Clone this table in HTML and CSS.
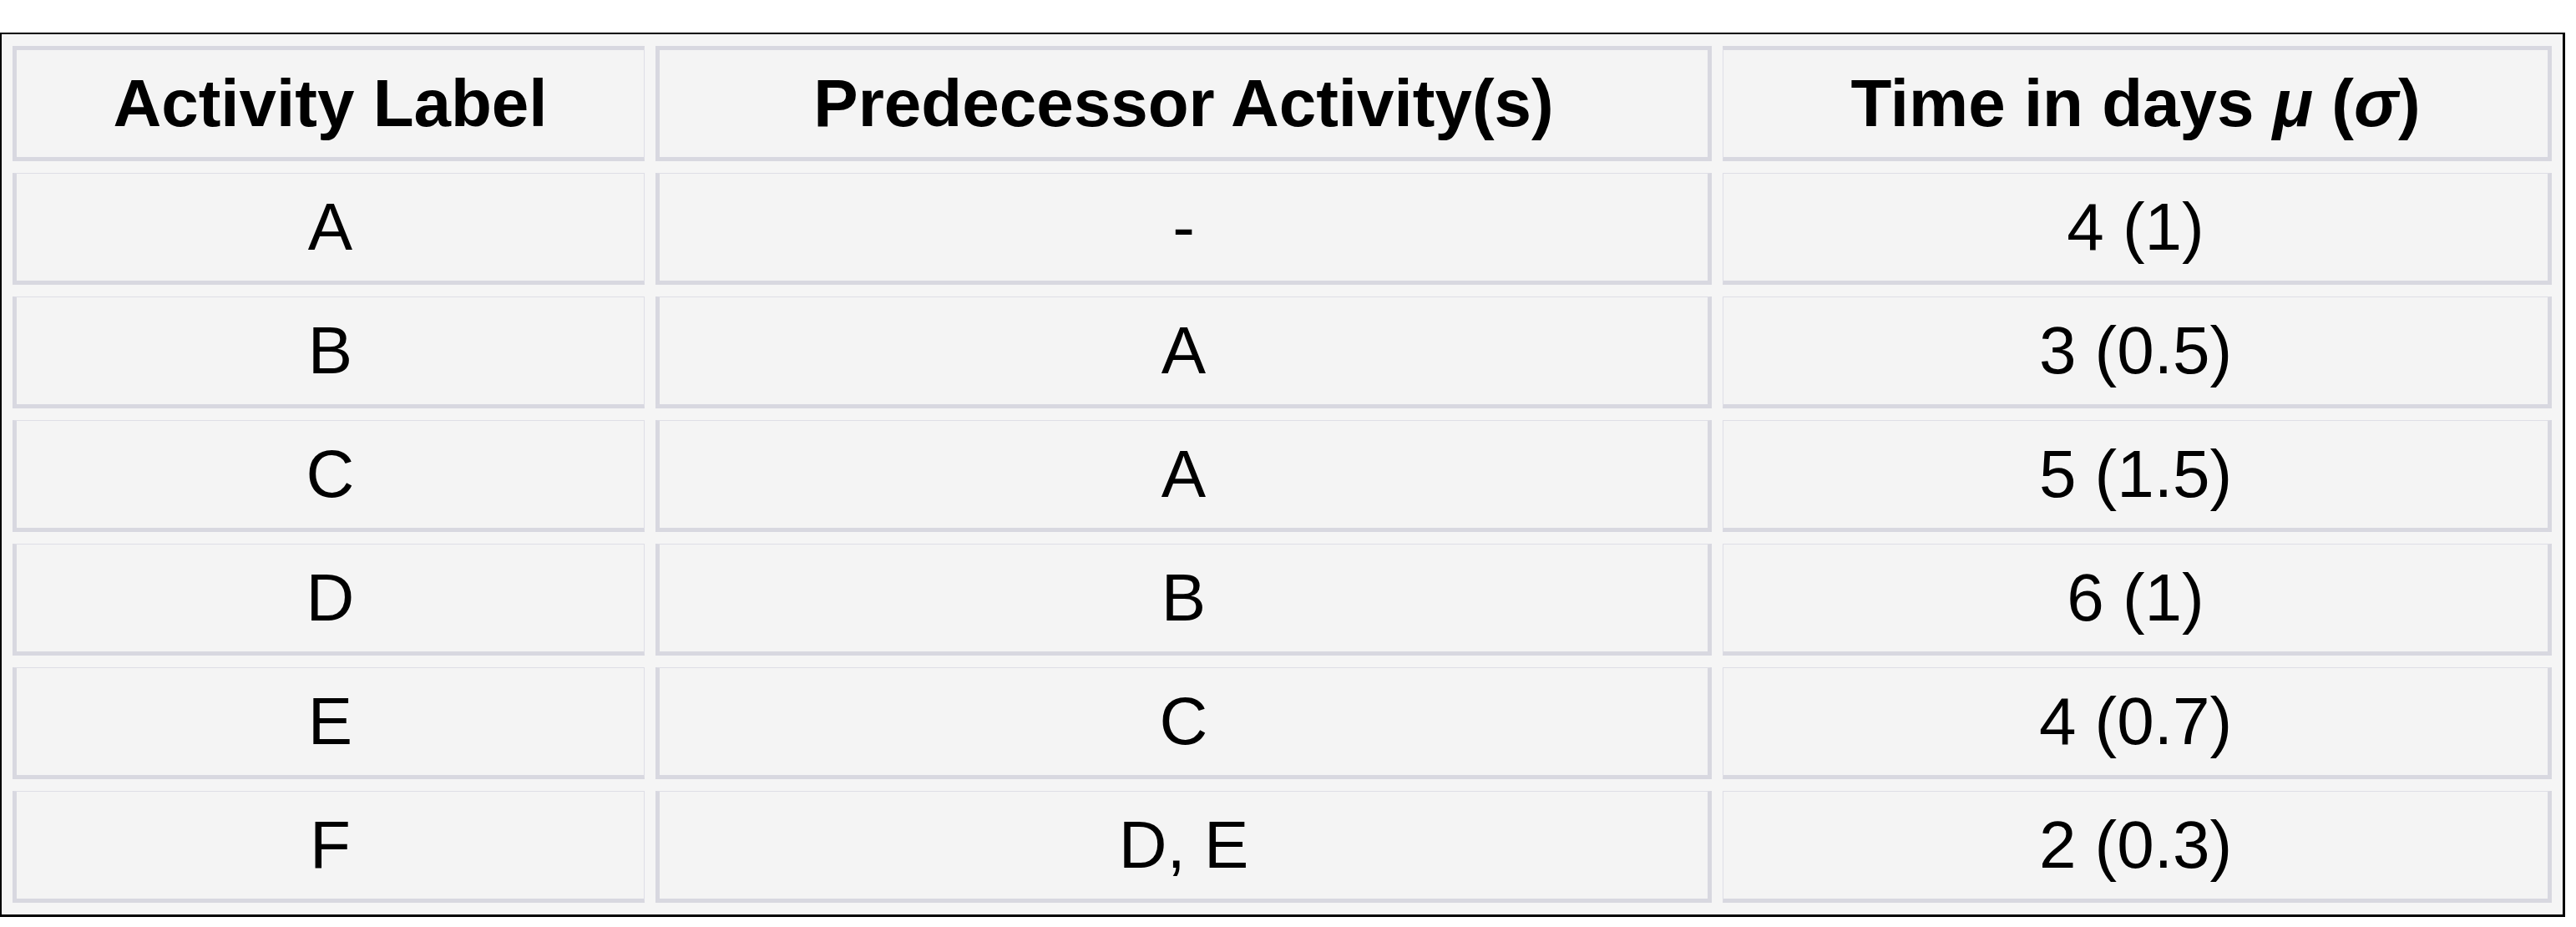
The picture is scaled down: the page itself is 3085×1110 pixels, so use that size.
FILE: index.html
```html
<!DOCTYPE html>
<html lang="en">
<head>
<meta charset="utf-8">
<title>Activities</title>
<link rel="stylesheet" href="styles.css">
</head>
<body>
<div class="frame">
  <table class="grid">
    <colgroup>
      <col class="c1"><col class="c2"><col class="c3">
    </colgroup>
    <thead>
      <tr>
        <th class="k1">Activity Label</th>
        <th class="k2">Predecessor Activity(s)</th>
        <th class="k3">Time in days <i>μ</i> (<i>σ</i>)</th>
      </tr>
    </thead>
    <tbody>
      <tr><td class="k1">A</td><td class="k2">-</td><td class="k3">4 (1)</td></tr>
      <tr><td class="k1">B</td><td class="k2">A</td><td class="k3">3 (0.5)</td></tr>
      <tr><td class="k1">C</td><td class="k2">A</td><td class="k3">5 (1.5)</td></tr>
      <tr><td class="k1">D</td><td class="k2">B</td><td class="k3">6 (1)</td></tr>
      <tr><td class="k1">E</td><td class="k2">C</td><td class="k3">4 (0.7)</td></tr>
      <tr><td class="k1">F</td><td class="k2">D, E</td><td class="k3">2 (0.3)</td></tr>
    </tbody>
  </table>
</div>
</body>
</html>
```

FILE: styles.css
```css
html, body {
  margin: 0;
  padding: 0;
  background: #ffffff;
}

body {
  font-family: "Liberation Sans", Arial, sans-serif;
  color: #000000;
}

.frame {
  margin-top: 39px;
  width: 3072px;
  box-sizing: border-box;
  border-style: solid;
  border-color: #000000;
  border-width: 2px 3px 3px 2px;
  background: #f5f5f5;
}

.grid {
  border-collapse: separate;
  border-spacing: 13px 14px;
  table-layout: fixed;
  width: 3067px;
}

.c1 { width: 757px; }
.c2 { width: 1265px; }
.c3 { width: 993px; }

.grid th,
.grid td {
  box-sizing: border-box;
  background: #f4f4f4;
  text-align: center;
  vertical-align: middle;
  padding: 0;
  font-size: 80px;
  line-height: 1;
  border-style: solid;
  border-color: #dedee6;
  border-width: 1px 1px 5px 5px;
}

.grid th {
  height: 138px;
  font-weight: bold;
  border-top: 5px solid #d8d8e0;
}

.grid td {
  height: 134px;
  font-weight: normal;
}

.grid th,
.grid td {
  border-bottom-color: #d8d8e0;
  border-left-color: #d8d8e0;
}

.grid .k2 {
  border-right: 5px solid #d8d8e0;
}

.grid .k3 {
  border-left: 1px solid #dedee6;
  border-right: 5px solid #d8d8e0;
}

.grid i {
  font-style: italic;
}
```
